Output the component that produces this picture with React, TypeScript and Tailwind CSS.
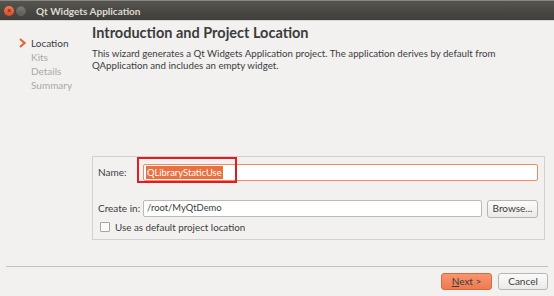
import React from "react";

export default function App() {
  const font = { fontFamily: 'Lato, "Noto Sans", sans-serif' };
  return (
    <div className="w-[554px] h-[296px] bg-[#f2f1f0] flex flex-col overflow-hidden" style={font}>
      {/* Title bar */}
      <div className="h-[20px] flex items-center bg-gradient-to-b from-[#56544e] to-[#3f3e3a] border-t border-[#8a8780] shrink-0">
        <div className="ml-[4px] w-[10px] h-[10px] rounded-full bg-gradient-to-b from-[#f47a50] to-[#d9482a] flex items-center justify-center">
          <span className="text-[7px] leading-none text-[#5a2a1a] font-bold">×</span>
        </div>
        <div className="ml-[2px] w-[10px] h-[10px] rounded-full bg-gradient-to-b from-[#7d7b75] to-[#5e5c57] border border-[#6b6964]" />
        <div className="ml-[10px] text-[10px] font-bold text-[#dfdbd2] leading-none">
          Qt Widgets Application
        </div>
      </div>
      <div className="h-px bg-[#d8d6d2] shrink-0" />

      <div className="flex flex-1">
        {/* Sidebar */}
        <div className="w-[92px] shrink-0 pt-[15px] pl-[19px] text-[10px] leading-[14px]">
          <div className="flex items-center">
            <svg width="7" height="10" viewBox="0 0 7 10" className="mr-[5px]">
              <path d="M1 1 L5.5 5 L1 9" fill="none" stroke="#e0683a" strokeWidth="2.2" strokeLinejoin="miter" />
            </svg>
            <span className="text-[#3c3c3c]">Location</span>
          </div>
          <div className="pl-[12px] text-[#aaa8a5]">Kits</div>
          <div className="pl-[12px] text-[#aaa8a5]">Details</div>
          <div className="pl-[12px] text-[#aaa8a5]">Summary</div>
        </div>

        {/* Content */}
        <div className="flex-1 flex flex-col pr-[9px]">
          <div className="mt-[2px] text-[14.5px] font-bold text-[#3c3c3c] leading-[20px]">
            Introduction and Project Location
          </div>
          <div className="mt-[5px] text-[9.7px] leading-[11.5px] text-[#3c3c3c]">
            This wizard generates a Qt Widgets Application project. The application derives by default from
            <br />
            QApplication and includes an empty widget.
          </div>

          <div className="mt-[85px] h-[84px] border border-[#d3d1cd] relative text-[10px] text-[#3c3c3c]">
            {/* Red annotation */}
            <div className="absolute left-[44px] top-0 w-[100px] h-[26px] border-2 border-[#e41b23] z-10" />
            {/* Name row */}
            <div className="flex items-center mt-[7px] pl-[5px] pr-[6px] h-[17px]">
              <div className="w-[45px] whitespace-nowrap">Name:</div>
              <div className="flex-1 h-[17px] border border-[#ef8a62] rounded-[2px] bg-white flex items-center pl-[2px]">
                <span className="bg-[#e9703f] text-white text-[9.4px] leading-[13px] px-[1px]">QLibraryStaticUse</span>
              </div>
            </div>

            {/* Create in row */}
            <div className="flex items-center mt-[19px] pl-[5px] pr-[6px] h-[17px]">
              <div className="w-[45px] whitespace-nowrap">Create in:</div>
              <div className="flex-1 h-[17px] border border-[#bdbab5] rounded-[2px] bg-white flex items-center pl-[3px] text-[9.4px]">
                /root/MyQtDemo
              </div>
              <div className="ml-[5px] w-[51px] h-[18px] border border-[#b9b6b0] rounded-[3px] bg-gradient-to-b from-[#fbfbfa] to-[#ebeae8] flex items-center justify-center">
                Browse...
              </div>
            </div>
            {/* Checkbox */}
            <div className="flex items-center mt-[3px] pl-[7px] h-[14px]">
              <div className="w-[10px] h-[10px] border border-[#a8a5a0] rounded-[1px] bg-[#fafafa]" />
              <div className="ml-[5px] text-[9.8px]">Use as default project location</div>
            </div>
          </div>
        </div>
      </div>

      {/* Separator */}
      <div className="mx-[6px] h-px bg-[#c4c2be] shrink-0" />

      {/* Buttons */}
      <div className="h-[29px] shrink-0 flex items-center justify-end pr-[6px] gap-[6px] text-[10px] text-[#3c3c3c]">
        <div className="w-[51px] h-[17px] rounded-[3px] border border-[#d66a42] bg-gradient-to-b from-[#f8956e] to-[#ef7a50] flex items-center justify-center">
          <span><span className="underline">N</span>ext &gt;</span>
        </div>
        <div className="w-[50px] h-[17px] rounded-[3px] border border-[#b9b6b0] bg-gradient-to-b from-[#fbfbfa] to-[#ebeae8] flex items-center justify-center">
          Cancel
        </div>
      </div>
    </div>
  );
}
